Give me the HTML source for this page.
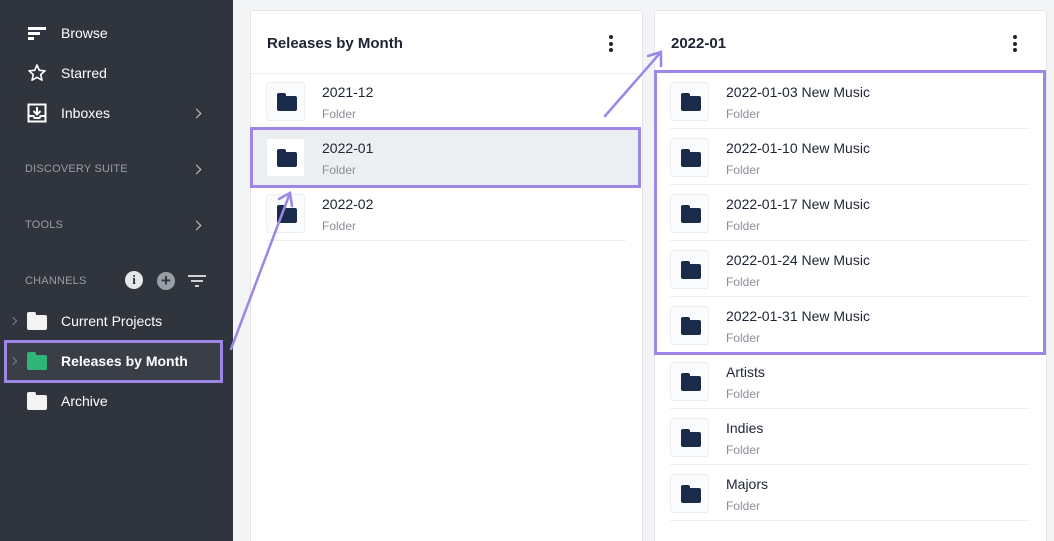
<!DOCTYPE html>
<html style="overflow:hidden"><head><meta charset="utf-8"><style>
*{margin:0;padding:0;box-sizing:border-box}
html,body{width:1054px;height:541px;overflow:hidden}
body{background:#f3f4f6;font-family:"Liberation Sans",sans-serif;position:relative}
.sb{position:absolute;left:0;top:0;width:233px;height:541px;background:#30343c}
.t{position:absolute;color:#fff;font-size:14px;white-space:nowrap}
.sec{position:absolute;color:#9a9ea6;font-size:11px;letter-spacing:.2px}
.chev{position:absolute;width:7px;height:7px;border-right:1.6px solid #c8cbd0;border-top:1.6px solid #c8cbd0;transform:rotate(45deg)}
.panel{position:absolute;top:10px;height:531px;background:#fff;border:1px solid #e3e5e8;border-bottom:none;border-radius:3px 3px 0 0}
.ph{position:absolute;top:32px;font-size:15px;font-weight:bold;color:#1d2433}
.dots{position:absolute;top:24px;width:4px}
.dots i{display:block;width:4px;height:4px;border-radius:2px;background:#1d2433;margin-bottom:2.5px}
.row{position:absolute;height:56px}
.ib{position:absolute;left:0;top:9px;width:39px;height:39px;border:1px solid #eceef0;border-radius:3px;background:#fafbfc}
.ib b{position:absolute;left:10px;top:13px;width:20px;height:15px;background:#1a2a4a;border-radius:2px}
.ib b:before{content:"";position:absolute;left:0;top:-3px;width:9px;height:4px;background:#1a2a4a;border-radius:2px 2px 0 0}
.rt{position:absolute;left:56px;top:11px;font-size:14px;color:#1d2433;white-space:nowrap}
.rs{position:absolute;left:56px;top:34px;font-size:12px;color:#8a8e96}
.dv{position:absolute;left:0;right:0;bottom:0;height:1px;background:#eceef0}
.fw{position:absolute;width:20px;height:15px;background:#f4f4f4;border-radius:2px}
.fw:before{content:"";position:absolute;left:0;top:-3px;width:9px;height:4px;background:inherit;border-radius:2px 2px 0 0}
.box{position:absolute;border:3px solid #9d86e6}
</style></head><body>
<div class="sb">
 <div style="position:absolute;left:28px;top:27px;width:18px;height:2.5px;background:#fff"></div>
 <div style="position:absolute;left:28px;top:32px;width:12px;height:2.5px;background:#fff"></div>
 <div style="position:absolute;left:28px;top:37px;width:6px;height:2.5px;background:#fff"></div>
 <div class="t" style="left:61px;top:25px">Browse</div>
 <svg style="position:absolute;left:27px;top:63px" width="20" height="20" viewBox="0 0 20 20"><path d="M10 2l2.3 5.3 5.7.5-4.3 3.8 1.3 5.6L10 14.3 5 17.2l1.3-5.6L2 7.8l5.7-.5z" fill="none" stroke="#fff" stroke-width="1.6" stroke-linejoin="round"/></svg>
 <div class="t" style="left:61px;top:65px">Starred</div>
 <svg style="position:absolute;left:27px;top:103px" width="20" height="20" viewBox="0 0 20 20"><rect x="1.5" y="1.5" width="17" height="17" fill="none" stroke="#fff" stroke-width="2"/><path d="M10 4v7M6.5 8l3.5 3.5L13.5 8" stroke="#fff" stroke-width="2" fill="none"/><path d="M1.5 13h5l1 2h5l1-2h5" stroke="#fff" stroke-width="2" fill="none"/></svg>
 <div class="t" style="left:61px;top:105px">Inboxes</div>
 <div class="chev" style="left:193px;top:110px"></div>
 <div class="sec" style="left:25px;top:163px">DISCOVERY SUITE</div>
 <div class="chev" style="left:193px;top:166px"></div>
 <div class="sec" style="left:25px;top:219px">TOOLS</div>
 <div class="chev" style="left:193px;top:222px"></div>
 <div class="sec" style="left:25px;top:275px">CHANNELS</div>
 <div style="position:absolute;left:125px;top:271px;width:18px;height:18px;border-radius:9px;background:#e6e7e9;color:#30343c;font-size:13px;font-weight:bold;text-align:center;line-height:18px;font-family:'Liberation Serif',serif">i</div>
 <div style="position:absolute;left:157px;top:272px;width:18px;height:18px;border-radius:9px;background:#9a9ea6;color:#30343c;font-size:17px;font-weight:bold;text-align:center;line-height:18px">+</div>
 <div style="position:absolute;left:188px;top:275px;width:18px;height:2px;background:#d0d2d6"></div>
 <div style="position:absolute;left:191px;top:280px;width:12px;height:2px;background:#d0d2d6"></div>
 <div style="position:absolute;left:195px;top:285px;width:4px;height:2px;background:#d0d2d6"></div>
 <div class="chev" style="left:10px;top:318px;width:6px;height:6px;border-color:#7a7e86"></div>
 <div class="fw" style="left:27px;top:315px"></div>
 <div class="t" style="left:61px;top:313px">Current Projects</div>
 <div style="position:absolute;left:5px;top:341px;width:218px;height:42px;background:#3a3e47"></div>
 <div class="chev" style="left:10px;top:358px;width:6px;height:6px;border-color:#7a7e86"></div>
 <div class="fw" style="left:27px;top:355px;background:#2fb57a"></div>
 <div class="t" style="left:61px;top:353px;font-weight:bold">Releases by Month</div>
 <div class="fw" style="left:27px;top:395px"></div>
 <div class="t" style="left:61px;top:393px">Archive</div>
</div>
<div class="box" style="left:4px;top:340px;width:219px;height:43px"></div>

<div class="panel" style="left:250px;width:393px">
 <div class="ph" style="left:16px;top:24px">Releases by Month</div>
 <div class="dots" style="left:358px"><i></i><i></i><i></i></div>
 <div style="position:absolute;left:0;right:0;top:62px;height:1px;background:#eceef0"></div>
</div>
<div style="position:absolute;left:250px;top:128px;width:390px;height:59px;background:#eceff1"></div>
<div class="row" style="left:266px;top:73px;width:360px"><div class="ib"><b></b></div><div class="rt">2021-12</div><div class="rs">Folder</div><div class="dv"></div></div>
<div class="row" style="left:266px;top:129px;width:360px"><div class="ib" style="background:#fff"><b></b></div><div class="rt">2022-01</div><div class="rs">Folder</div></div>
<div class="row" style="left:266px;top:185px;width:360px"><div class="ib"><b></b></div><div class="rt">2022-02</div><div class="rs">Folder</div><div class="dv"></div></div>
<div class="box" style="left:250px;top:127px;width:391px;height:61px"></div>

<div class="panel" style="left:654px;width:393px">
 <div class="ph" style="left:16px;top:24px">2022-01</div>
 <div class="dots" style="left:358px"><i></i><i></i><i></i></div>
</div>
<div class="row" style="left:670px;top:73px;width:360px"><div class="ib"><b></b></div><div class="rt">2022-01-03 New Music</div><div class="rs">Folder</div><div class="dv"></div></div>
<div class="row" style="left:670px;top:129px;width:360px"><div class="ib"><b></b></div><div class="rt">2022-01-10 New Music</div><div class="rs">Folder</div><div class="dv"></div></div>
<div class="row" style="left:670px;top:185px;width:360px"><div class="ib"><b></b></div><div class="rt">2022-01-17 New Music</div><div class="rs">Folder</div><div class="dv"></div></div>
<div class="row" style="left:670px;top:241px;width:360px"><div class="ib"><b></b></div><div class="rt">2022-01-24 New Music</div><div class="rs">Folder</div><div class="dv"></div></div>
<div class="row" style="left:670px;top:297px;width:360px"><div class="ib"><b></b></div><div class="rt">2022-01-31 New Music</div><div class="rs">Folder</div></div>
<div class="row" style="left:670px;top:353px;width:360px"><div class="ib"><b></b></div><div class="rt">Artists</div><div class="rs">Folder</div><div class="dv"></div></div>
<div class="row" style="left:670px;top:409px;width:360px"><div class="ib"><b></b></div><div class="rt">Indies</div><div class="rs">Folder</div><div class="dv"></div></div>
<div class="row" style="left:670px;top:465px;width:360px"><div class="ib"><b></b></div><div class="rt">Majors</div><div class="rs">Folder</div><div class="dv"></div></div>
<div class="box" style="left:654px;top:70px;width:392px;height:285px"></div>

<svg style="position:absolute;left:0;top:0" width="1054" height="541">
 <g stroke="#9d86e6" stroke-width="2.5" fill="none" stroke-linecap="round">
  <path d="M231 349L290 193M279 199L290 193L292 206"/>
  <path d="M605 116L661 52M648 56L661 52L661 66"/>
 </g>
</svg>
</body></html>
